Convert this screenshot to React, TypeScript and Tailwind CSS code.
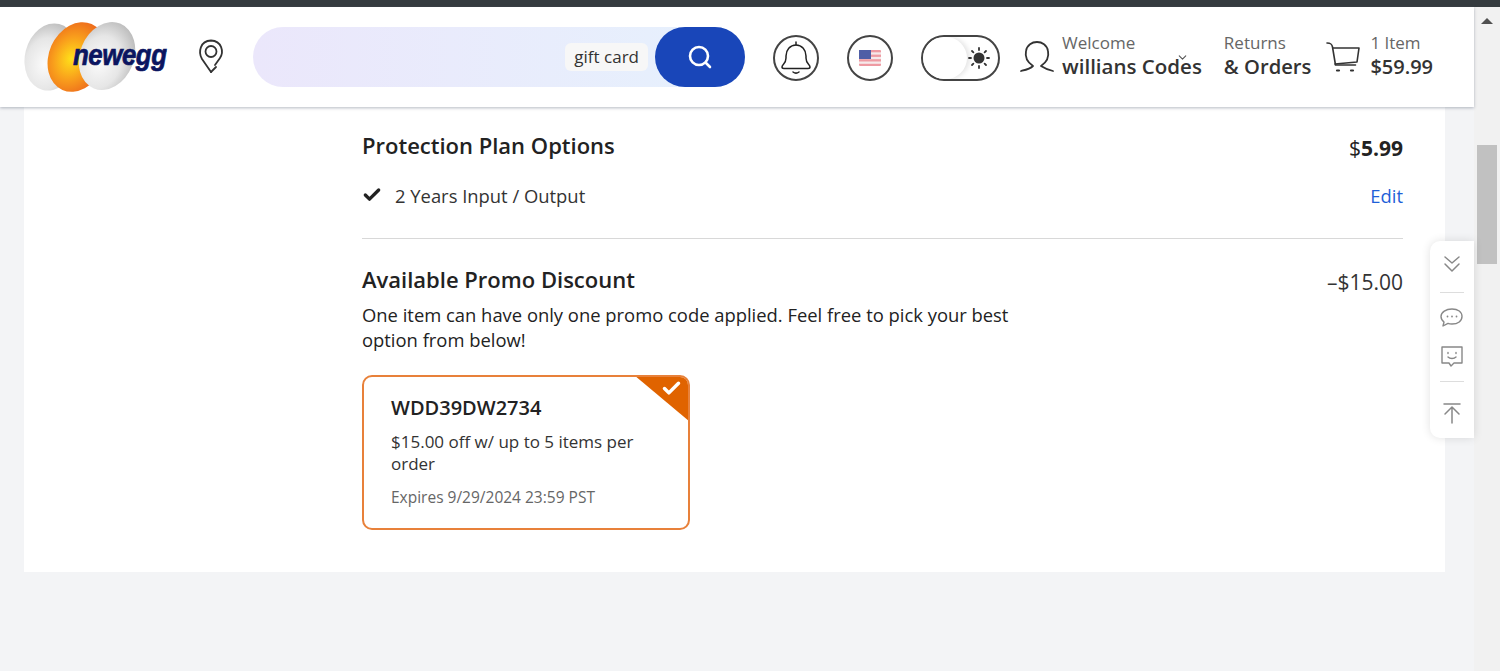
import { Check, ChevronDown } from "lucide-react";

const font = { fontFamily: '"Open Sans", sans-serif' };

const Logo = () => {
  return (
    <div className="relative w-[146px] h-[72px] shrink-0">
      <svg width="146" height="72" viewBox="0 0 146 72" className="absolute left-0 top-0">
        <defs>
          <radialGradient id="egg" cx="0.42" cy="0.62" r="0.7">
            <stop offset="0" stopColor="#fbfbfb" />
            <stop offset="0.55" stopColor="#e6e6e6" />
            <stop offset="1" stopColor="#b4b4b4" />
          </radialGradient>
          <radialGradient id="yolk" cx="0.42" cy="0.55" r="0.6">
            <stop offset="0" stopColor="#ffe11a" />
            <stop offset="0.5" stopColor="#f9a01c" />
            <stop offset="1" stopColor="#ec641c" />
          </radialGradient>
        </defs>
        <ellipse cx="27" cy="36" rx="26" ry="34" fill="url(#egg)" transform="rotate(14 27 36)" />
        <ellipse cx="53" cy="36" rx="28" ry="36" fill="url(#yolk)" transform="rotate(24 53 36)" />
        <ellipse cx="83" cy="35" rx="27" ry="35" fill="url(#egg)" transform="rotate(22 83 35)" />
        <circle cx="142" cy="30" r="0.8" fill="#777" />
      </svg>
      <span
        className="absolute left-[49px] top-[18px] text-[30px] leading-[32px] font-bold italic tracking-[-0.5px] text-[#0b1560] scale-x-[0.86] origin-left [-webkit-text-stroke:0.7px_#0b1560]"
        style={{ fontFamily: '"Liberation Sans", sans-serif' }}
      >
        newegg
      </span>
    </div>
  );
};

const PinIcon = () => (
  <svg width="28" height="36" viewBox="0 0 28 36" fill="none" stroke="#333" strokeWidth="1.8" strokeLinecap="round" strokeLinejoin="round">
    <path d="M14 34 L5 21 C1 14 3 3 14 2.5 C25 3 27 14 23 20 M23 20 L18 27" />
    <path d="M14 34 L19 29" />
    <circle cx="14" cy="13.5" r="5.5" />
  </svg>
);

const BellIcon = () => (
  <svg width="34" height="36" viewBox="0 0 34 36" fill="none" stroke="#222" strokeWidth="1.5" strokeLinecap="round" strokeLinejoin="round">
    <path d="M17 2v3" />
    <path d="M3 27c0-3 4-3 4-9v-2c0-6 4-11 10-11s10 5 10 11v2c0 6 4 6 4 9 0 1-1 1.500-2 1.500H5c-1 0-2-.5-2-1.500z" />
    <path d="M14 32c2 1.500 4 1.500 6 0" />
  </svg>
);

const Flag = () => (
  <svg width="22" height="16" viewBox="0 0 22 16">
    <rect width="22" height="16" rx="1" fill="#ee9aa2" />
    <rect y="2.300" width="22" height="2.300" fill="#f6e9ea" />
    <rect y="6.900" width="22" height="2.300" fill="#f6e9ea" />
    <rect y="11.500" width="22" height="2.300" fill="#f6e9ea" />
    <rect width="12" height="9" fill="#4f5ea6" />
  </svg>
);

const Sun = () => (
  <svg width="24" height="24" viewBox="0 0 24 24" stroke="#333" strokeWidth="1.800" strokeLinecap="round">
    <circle cx="12" cy="12" r="5.500" fill="#333" stroke="none" />
    <path d="M12 2v2M12 20v2M2 12h2M20 12h2M5 5l1.400 1.400M17.600 17.600L19 19M5 19l1.400-1.400M17.600 6.400L19 5" />
  </svg>
);

const UserIcon = () => (
  <svg width="36" height="34" viewBox="0 0 36 34" fill="none" stroke="#333" strokeWidth="1.800" strokeLinecap="round" strokeLinejoin="round">
    <path d="M2 31C6 30 11 29 14 26C8 22 6 16 7 11C8 5 13 2 18 2C23 2 28 5 29 11C30 16 28 22 22 26C25 28 30 30 34 31" />
  </svg>
);

const CartIcon = () => (
  <svg width="34" height="32" viewBox="0 0 34 32" fill="none" stroke="#333" strokeWidth="1.600" strokeLinecap="round" strokeLinejoin="round">
    <path d="M1 2c4 0 5 1 5.500 4l3 18h20" />
    <path d="M7 7h26l-2 14-22 2" />
    <path d="M11 29.500h2M25 29.500h2" strokeWidth="2.200" />
  </svg>
);

const Header = () => {
  return (
    <header className="relative z-10 h-[100px] bg-white shadow-[0_1px_3px_rgba(90,100,120,0.45)] flex items-center pl-[24px]">
      <Logo />
      <div className="ml-[27px] -mt-[2px]">
        <PinIcon />
      </div>
      <div className="ml-[28px] w-[492px] h-[60px] rounded-full bg-gradient-to-r from-[#ebe7fb] to-[#e6f1fd] flex items-center justify-end relative">
        <span className="mr-[97px] h-[28px] px-[9px] rounded-[6px] bg-[#f7f7f7] text-[17px] leading-[28px] text-[#333]">gift card</span>
        <button className="absolute right-0 top-0 w-[90px] h-[60px] rounded-full bg-[#1946b9] flex items-center justify-center">
          <svg width="26" height="26" viewBox="0 0 26 26" fill="none" stroke="#fff" strokeWidth="2.600" strokeLinecap="round">
            <circle cx="12" cy="12" r="9" />
            <path d="M19 19l4 4" />
          </svg>
        </button>
      </div>
      <div className="ml-[28px] mt-[1px] w-[46px] h-[46px] rounded-full border-2 border-[#444] flex items-center justify-center">
        <BellIcon />
      </div>
      <div className="ml-[28px] mt-[1px] w-[46px] h-[46px] rounded-full border-2 border-[#444] flex items-center justify-center">
        <Flag />
      </div>
      <div className="ml-[28px] mt-[1px] w-[79px] h-[46px] rounded-full border-2 border-[#444] flex items-center relative overflow-hidden">
        <div className="w-[44px] h-[42px] rounded-full bg-white shadow-[3px_0_5px_rgba(0,0,0,0.1)]" />
        <div className="absolute right-[7px] top-[9px]">
          <Sun />
        </div>
      </div>
      <div className="ml-[19px]">
        <UserIcon />
      </div>
      <div className="ml-[7px] relative -mt-[4px]">
        <div className="text-[17px] leading-[22px] text-[#666]">Welcome</div>
        <div className="text-[20.5px] leading-[24px] font-semibold text-[#333] whitespace-nowrap">willians Codes</div>
        <ChevronDown className="absolute left-[114px] top-[19px] text-[#555]" size={13} />
      </div>
      <div className="ml-[22px] -mt-[4px]">
        <div className="text-[17px] leading-[22px] text-[#666]">Returns</div>
        <div className="text-[20.2px] leading-[24px] font-semibold text-[#333] whitespace-nowrap">&amp; Orders</div>
      </div>
      <div className="ml-[15px]">
        <CartIcon />
      </div>
      <div className="ml-[10px] -mt-[2px]">
        <div className="text-[17px] leading-[22px] text-[#666]">1 Item</div>
        <div className="text-[20px] leading-[26px] font-semibold text-[#333]">$59.99</div>
      </div>
    </header>
  );
};

const SideTools = () => {
  return (
    <div className="absolute right-0 top-[234px] w-[44px] h-[197px] bg-white rounded-l-[10px] shadow-[0_0_10px_rgba(0,0,0,0.12)] flex flex-col items-center z-10 text-[#888]">
      <svg className="mt-[13px]" width="20" height="20" viewBox="0 0 20 20" fill="none" stroke="#888" strokeWidth="1.500" strokeLinecap="round" strokeLinejoin="round">
        <path d="M3 3l7 6 7-6M3 10l7 7 7-7" />
      </svg>
      <div className="w-[24px] h-px bg-[#ddd] mt-[18px]" />
      <svg className="mt-[14px]" width="24" height="21" viewBox="0 0 24 21" fill="none" stroke="#888" strokeWidth="1.400" strokeLinecap="round" strokeLinejoin="round">
        <path d="M12 2c6 0 10 3 10 7.500S18 17 12 17c-1.500 0-3-.2-4-.6L3 19l1-4c-2-1.500-3-3.500-3-5.500C1 5 6 2 12 2z" />
        <path d="M7.500 9.500h.01M12 9.500h.01M16.500 9.500h.01" strokeWidth="1.800" />
      </svg>
      <svg className="mt-[17px]" width="24" height="24" viewBox="0 0 24 24" fill="none" stroke="#888" strokeWidth="1.400" strokeLinecap="round" strokeLinejoin="round">
        <path d="M2 2h20v16h-8l-3 3-2-3H2z" />
        <path d="M8 7.500v1M16 7.500v1" />
        <path d="M8 12c2 2 6 2 8 0" />
      </svg>
      <div className="w-[24px] h-px bg-[#ddd] mt-[12px]" />
      <svg className="mt-[20px]" width="20" height="22" viewBox="0 0 20 22" fill="none" stroke="#888" strokeWidth="1.500" strokeLinecap="round" strokeLinejoin="round">
        <path d="M2 2h16M10 21V6M3 12l7-7 7 7" />
      </svg>
    </div>
  );
};

const PromoCard = () => {
  return (
    <div className="relative mt-[23px] w-[328px] h-[155px] rounded-[10px] border-2 border-[#e8813a] overflow-hidden pl-[27px] pt-[18px]">
      <div className="absolute -right-[2px] -top-[2px] w-0 h-0 border-t-[47px] border-l-[56px] border-t-[#e06300] border-l-transparent" />
      <Check className="absolute right-[6px] top-[1px] text-white" size={21} strokeWidth={4} />
      <div className="text-[20px] leading-[26px] font-semibold text-[#222]">WDD39DW2734</div>
      <div className="mt-[10px] text-[17px] leading-[22px] text-[#333] w-[270px]">$15.00 off w/ up to 5 items per order</div>
      <div className="mt-[12px] text-[15.500px] leading-[20px] text-[#666]">Expires 9/29/2024 23:59 PST</div>
    </div>
  );
};

const Content = () => {
  return (
    <main className="pl-[24px] pr-[29px] pb-[99px] bg-[#f3f4f6]">
      <div className="bg-white h-[465px] pl-[338px] pr-[42px] pt-[24px]">
        <div className="flex justify-between items-start">
          <h2 className="text-[22px] leading-[28px] font-semibold text-[#222]">Protection Plan Options</h2>
          <div className="text-[21px] leading-[34px] text-[#222]">
            $<span className="font-bold">5.99</span>
          </div>
        </div>
        <div className="mt-[17px] flex justify-between items-center h-[28px]">
          <div className="flex items-center text-[18.400px] text-[#333]">
            <Check size={20} strokeWidth={4} className="text-[#222] -mt-[1px]" />
            <span className="ml-[13px]">2 Years Input / Output</span>
          </div>
          <a className="text-[18.400px] text-[#1f5fd8]">Edit</a>
        </div>
        <div className="mt-[28px] h-px bg-[#d8d8d8]" />
        <div className="mt-[26px] flex justify-between items-start">
          <h2 className="text-[22px] leading-[28px] font-semibold text-[#222]">Available Promo Discount</h2>
          <div className="text-[21px] leading-[34px] text-[#333]">–$15.00</div>
        </div>
        <p className="mt-[3px] w-[670px] text-[18.400px] leading-[25px] text-[#222]">
          One item can have only one promo code applied. Feel free to pick your best option from below!
        </p>
        <PromoCard />
      </div>
    </main>
  );
};

export default function App() {
  return (
    <div className="h-[671px] overflow-hidden bg-[#f3f4f6]" style={font}>
      <div className="h-[7px] bg-[#353b3f]" />
      <div className="flex h-[664px]">
        <div className="relative flex-1 min-w-0">
          <Header />
          <Content />
          <SideTools />
        </div>
        <div className="w-[26px] bg-[#f1f1f1] relative">
          <div className="flex justify-center pt-[11px]">
            <div className="w-0 h-0 border-l-[6px] border-r-[6px] border-b-[6px] border-l-transparent border-r-transparent border-b-[#505050]" />
          </div>
          <div className="mt-[121px] ml-[3px] w-[20px] h-[119px] bg-[#c1c1c1]" />
        </div>
      </div>
    </div>
  );
}
